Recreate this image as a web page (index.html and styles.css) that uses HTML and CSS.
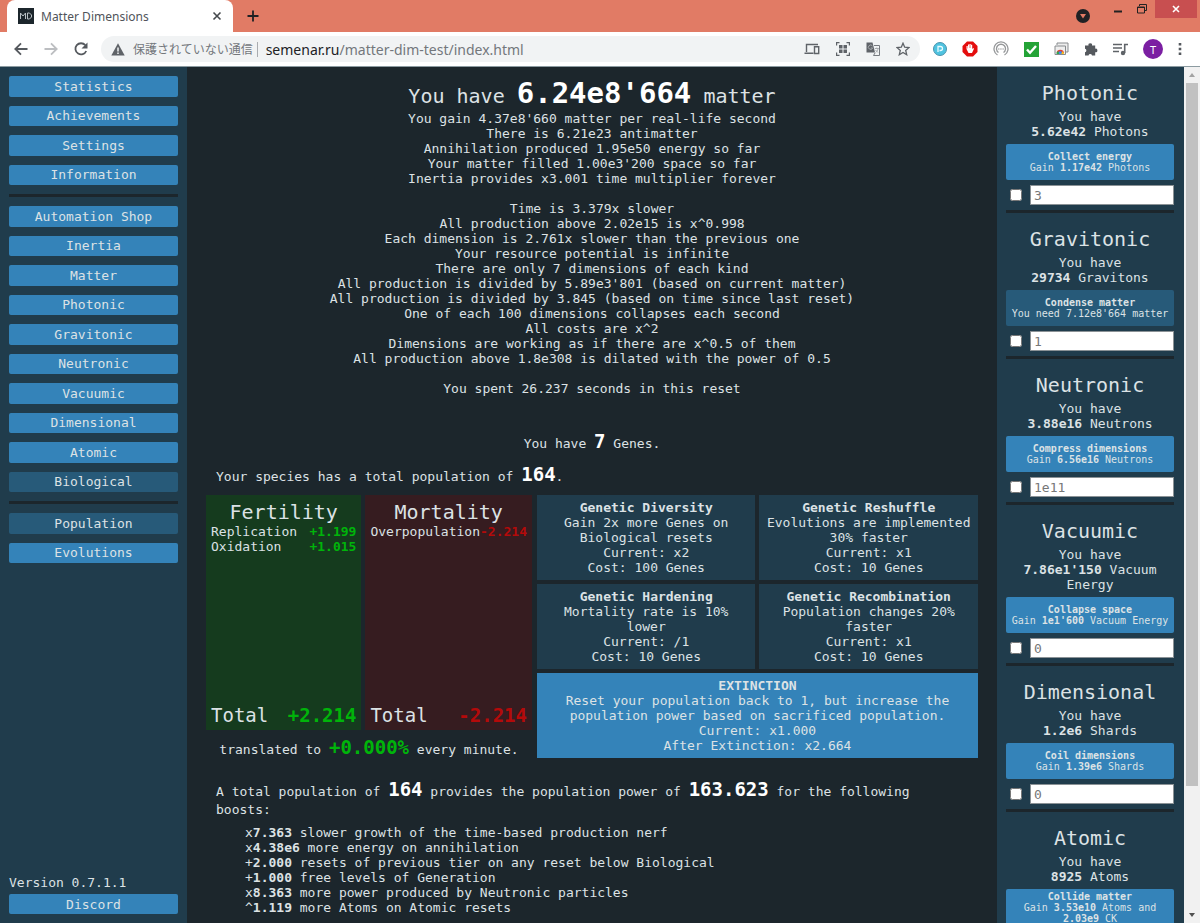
FILE: index.html
```html
<!DOCTYPE html>
<html lang="en">
<head>
    <meta charset="UTF-8">
    <meta name="viewport" content="width=device-width, initial-scale=1.0">
    <title>Matter Dimensions</title>
    <link rel="stylesheet" href="styles.css">
</head>
<body>
    <header class="browser">
        <div class="tab-strip">
            <div class="tab">
                <svg class="favicon" width="16" height="16" viewBox="0 0 16 16"><rect width="16" height="16" fill="#1c262c"/><path d="M2.500 11V5l2.500 3 2.500-3v6M9.500 5v6h2l2-2V7l-2-2z" fill="none" stroke="#b8c0c4"/></svg>
                <span class="tab-title">Matter Dimensions</span>
                <button class="icon-button" aria-label="Close tab"><svg width="10" height="10" viewBox="0 0 10 10"><path d="M1.500 1.500l7 7M8.500 1.500l-7 7" stroke="#45494d" stroke-width="1.600"/></svg></button>
            </div>
            <button class="icon-button new-tab" aria-label="New tab"><svg width="12" height="12" viewBox="0 0 12 12"><path d="M6 0.500v11M0.500 6h11" stroke="#202124" stroke-width="1.800"/></svg></button>
            <div class="window-buttons">
                <button class="icon-button account" aria-label="Tab search"><svg width="14" height="14" viewBox="0 0 14 14"><circle cx="7" cy="7" r="7" fill="#202124"/><path d="M4 5h6l-3 4.500z" fill="#e17b65"/></svg></button>
                <button class="icon-button minimize" aria-label="Minimize"><svg width="8" height="3" viewBox="0 0 8 3"><path d="M0 1.500h8" stroke="#222" stroke-width="2"/></svg></button>
                <button class="icon-button restore" aria-label="Restore"><svg width="10" height="10" viewBox="0 0 10 10"><path d="M2.500 2V0.500h7v6H8M0.500 3h7v6h-7z" fill="none" stroke="#222"/><path d="M0.500 3.500h7" stroke="#222"/></svg></button>
                <button class="icon-button close" aria-label="Close"><svg width="8" height="8" viewBox="0 0 8 8"><path d="M1 1l6 6M7 1l-6 6" stroke="#fff" stroke-width="1.600"/></svg></button>
            </div>
        </div>
        <div class="toolbar">
            <div class="nav-buttons">
                <button class="icon-button" aria-label="Back"><svg width="14" height="14" viewBox="0 0 14 14"><path d="M13.500 7H1.500M7 1.300L1.300 7 7 12.700" fill="none" stroke="#55595e" stroke-width="1.800"/></svg></button>
                <button class="icon-button" aria-label="Forward"><svg width="14" height="14" viewBox="0 0 14 14"><path d="M0.500 7h12M7 1.300L12.700 7 7 12.700" fill="none" stroke="#bcbec1" stroke-width="1.800"/></svg></button>
                <button class="icon-button" aria-label="Reload"><svg width="14" height="14" viewBox="0 0 14 14"><path d="M12.200 9a5.600 5.600 0 1 1-.9-5.800" fill="none" stroke="#55595e" stroke-width="1.800"/><path d="M13.500 0.500v6h-6z" fill="#55595e"/></svg></button>
            </div>
            <div class="omnibox">
                <svg width="14" height="13" viewBox="0 0 14 13"><path d="M7 0.300L13.700 12.500H0.300z" fill="#5f6368"/><path d="M7 4.500v4M7 9.500v1.500" stroke="#f1f3f4" stroke-width="1.500"/></svg>
                <span class="warning" lang="ja">保護されていない通信</span>
                <span class="url"><b>semenar.ru</b>/matter-dim-test/index.html</span>
                <svg width="16" height="14" viewBox="0 0 16 14"><path d="M14 2.500H2.500V10M0.500 11.200h9" fill="none" stroke="#5f6368" stroke-width="1.400"/><path d="M10.500 4.700h4.200v6.800h-4.200z" fill="none" stroke="#5f6368" stroke-width="1.400"/></svg>
                <svg width="14" height="14" viewBox="0 0 14 14"><path d="M0.600 3.500V0.600H3.500M10.500 0.600h2.900v2.900M13.400 10.500v2.900h-2.900M3.500 13.400H0.600v-2.900" fill="none" stroke="#5f6368" stroke-width="1.200"/><path d="M3 3h3.500v3.500H3zM7.500 3H11v3.500H7.500zM3 7.500h3.500V11H3zM7.500 7.500H11V11H7.500z" fill="#5f6368"/></svg>
                <svg width="14" height="14" viewBox="0 0 14 14"><path d="M0.500 0.500h6l2.500 10h-8.500z" fill="#5f6368"/><path d="M8 3.500h5.500v10H7.500l1.500-2.500" fill="none" stroke="#777b80"/><path d="M6.500 4A2.200 2.200 0 1 0 6.700 6H4.800M8.800 6.500h4M10.800 5.500v1M9.500 10.500c1.500-1 2.200-2 2.500-4M9.500 8l2.500 2.500" fill="none" stroke="#a8abae"/></svg>
                <svg width="14" height="14" viewBox="0 0 14 14"><path d="M7 1.200l1.700 4 4.300.4-3.300 2.800 1 4.300L7 10.400l-3.700 2.300 1-4.300L1 5.600l4.300-.4z" fill="none" stroke="#5f6368" stroke-width="1.300"/></svg>
            </div>
            <div class="extensions">
                <svg width="14" height="14" viewBox="0 0 14 14"><circle cx="7" cy="7" r="6.500" fill="#4fc3e0" stroke="#4b93ad"/><path d="M5 10V4.500h2.500a2 2 0 0 1 0 4H6.500" fill="none" stroke="#e8fbff" stroke-width="1.300"/></svg>
                <svg width="16" height="16" viewBox="0 0 16 16"><path d="M5 0.500h6L15.500 5v6L11 15.500H5L0.500 11V5z" fill="#e40d0d"/><path d="M4.500 8V5h1.200v2.500h.3V3.500h1.200V7h.3V3h1.200v4h.3V3.800h1.200V8l1-1 .8.8L10 12H6.500z" fill="#fff"/></svg>
                <svg width="16" height="16" viewBox="0 0 16 16"><path d="M4.500 14A7 7 0 1 1 11.500 14M5.500 11.500a4.500 4.500 0 1 1 5 0" fill="none" stroke="#96989a" stroke-width="1.300"/><path d="M5 8h6" stroke="#96989a" stroke-dasharray="1.500 .7"/></svg>
                <svg width="15" height="15" viewBox="0 0 15 15"><rect width="15" height="15" fill="#24a336"/><path d="M3 7.500l3 3.200L12 4" fill="none" stroke="#fff" stroke-width="2.400"/></svg>
                <svg width="15" height="14" viewBox="0 0 15 14"><path d="M3 3V1h11v9h-2M1 4h10.500v8.500H1z" fill="#eee" stroke="#888b8e"/><path d="M2.500 11a3.800 3.800 0 0 1 7.500 0z" fill="#e34133"/><path d="M2.500 12a3.800 3.800 0 0 1 1.500-3l2.200 3z" fill="#2da94f"/><path d="M10 12a3.800 3.800 0 0 0-1.500-2.700L6.200 12z" fill="#fbc116"/><circle cx="6.300" cy="10.500" r="1.500" fill="#4285f4"/></svg>
                <svg width="14" height="14" viewBox="0 0 14 14"><path d="M1 3.500h3.500a1.800 1.800 0 1 1 3.500 0h3.200v3.200a1.800 1.800 0 1 1 0 3.500v3.300H8a1.800 1.800 0 0 0-3.500 0H1v-3.300a1.800 1.800 0 0 0 0-3.500z" fill="#55595e"/></svg>
                <svg width="15" height="13" viewBox="0 0 15 13"><path d="M0 1.500h9M0 5h9M0 8.500h6M11.700 10V1.500H15" fill="none" stroke="#5f6368" stroke-width="1.600"/><circle cx="10" cy="10" r="2.200" fill="#5f6368"/></svg>
                <button class="avatar">T</button>
                <button class="icon-button" aria-label="Menu"><svg width="4" height="14" viewBox="0 0 4 14"><path d="M0.700 1h2.600v2.600H0.700zM0.700 5.700h2.600v2.600H0.700zM0.700 10.400h2.600V13H0.700z" fill="#55595e"/></svg></button>
            </div>
        </div>
    </header>

    <div class="page">
        <aside class="sidebar">
            <nav>
                <button>Statistics</button>
                <button>Achievements</button>
                <button>Settings</button>
                <button>Information</button>
                <hr>
                <button>Automation Shop</button>
                <button>Inertia</button>
                <button>Matter</button>
                <button>Photonic</button>
                <button>Gravitonic</button>
                <button>Neutronic</button>
                <button>Vacuumic</button>
                <button>Dimensional</button>
                <button>Atomic</button>
                <button class="dark">Biological</button>
                <hr>
                <button class="dark">Population</button>
                <button>Evolutions</button>
            </nav>
            <div class="version">
                Version 0.7.1.1
                <button>Discord</button>
            </div>
        </aside>

        <main>
            <h1>You have <b>6.24e8'664</b> matter</h1>
            <p class="info">
                You gain 4.37e8'660 matter per real-life second<br>
                There is 6.21e23 antimatter<br>
                Annihilation produced 1.95e50 energy so far<br>
                Your matter filled 1.00e3'200 space so far<br>
                Inertia provides x3.001 time multiplier forever
            </p>
            <p class="info">
                Time is 3.379x slower<br>
                All production above 2.02e15 is x^0.998<br>
                Each dimension is 2.761x slower than the previous one<br>
                Your resource potential is infinite<br>
                There are only 7 dimensions of each kind<br>
                All production is divided by 5.89e3'801 (based on current matter)<br>
                All production is divided by 3.845 (based on time since last reset)<br>
                One of each 100 dimensions collapses each second<br>
                All costs are x^2<br>
                Dimensions are working as if there are x^0.5 of them<br>
                All production above 1.8e308 is dilated with the power of 0.5
            </p>
            <p class="info">You spent 26.237 seconds in this reset</p>

            <p class="genes">You have <b>7</b> Genes.</p>
            <p class="species">Your species has a total population of <b>164</b>.</p>

            <div class="population">
                <div class="rates">
                    <section class="fertility">
                        <h2>Fertility</h2>
                        <div class="rate"><span>Replication</span><b>+1.199</b></div>
                        <div class="rate"><span>Oxidation</span><b>+1.015</b></div>
                        <div class="rate total"><span>Total</span><b>+2.214</b></div>
                    </section>
                    <section class="mortality">
                        <h2>Mortality</h2>
                        <div class="rate"><span>Overpopulation</span><b>-2.214</b></div>
                        <div class="rate total"><span>Total</span><b>-2.214</b></div>
                    </section>
                    <p class="translated">translated to <b>+0.000%</b> every minute.</p>
                </div>
                <div class="upgrades">
                    <button><b>Genetic Diversity</b><br>Gain 2x more Genes on Biological resets<br>Current: x2<br>Cost: 100 Genes</button>
                    <button><b>Genetic Reshuffle</b><br>Evolutions are implemented 30% faster<br>Current: x1<br>Cost: 10 Genes</button>
                    <button><b>Genetic Hardening</b><br>Mortality rate is 10% lower<br>Current: /1<br>Cost: 10 Genes</button>
                    <button><b>Genetic Recombination</b><br>Population changes 20% faster<br>Current: x1<br>Cost: 10 Genes</button>
                    <button class="extinction"><b>EXTINCTION</b><br>Reset your population back to 1, but increase the population power based on sacrificed population.<br>Current: x1.000<br>After Extinction: x2.664</button>
                </div>
            </div>

            <p class="power">A total population of <b>164</b> provides the population power of <b>163.623</b> for the following boosts:</p>
            <ul class="boosts">
                <li>x<b>7.363</b> slower growth of the time-based production nerf</li>
                <li>x<b>4.38e6</b> more energy on annihilation</li>
                <li>+<b>2.000</b> resets of previous tier on any reset below Biological</li>
                <li>+<b>1.000</b> free levels of Generation</li>
                <li>x<b>8.363</b> more power produced by Neutronic particles</li>
                <li>^<b>1.119</b> more Atoms on Atomic resets</li>
            </ul>
        </main>

        <aside class="resources">
            <section>
                <h2>Photonic</h2>
                <p>You have<br><b>5.62e42</b> Photons</p>
                <button><b>Collect energy</b><br>Gain <b>1.17e42</b> Photons</button>
                <div class="auto"><input type="checkbox" aria-label="Automate Photonic"><input type="text" value="3" aria-label="Photonic threshold"></div>
            </section>
            <section>
                <h2>Gravitonic</h2>
                <p>You have<br><b>29734</b> Gravitons</p>
                <button class="dark"><b>Condense matter</b><br>You need 7.12e8'664 matter</button>
                <div class="auto"><input type="checkbox" aria-label="Automate Gravitonic"><input type="text" value="1" aria-label="Gravitonic threshold"></div>
            </section>
            <section>
                <h2>Neutronic</h2>
                <p>You have<br><b>3.88e16</b> Neutrons</p>
                <button><b>Compress dimensions</b><br>Gain <b>6.56e16</b> Neutrons</button>
                <div class="auto"><input type="checkbox" aria-label="Automate Neutronic"><input type="text" value="1e11" aria-label="Neutronic threshold"></div>
            </section>
            <section>
                <h2>Vacuumic</h2>
                <p>You have<br><b>7.86e1'150</b> Vacuum Energy</p>
                <button><b>Collapse space</b><br>Gain <b>1e1'600</b> Vacuum Energy</button>
                <div class="auto"><input type="checkbox" aria-label="Automate Vacuumic"><input type="text" value="0" aria-label="Vacuumic threshold"></div>
            </section>
            <section>
                <h2>Dimensional</h2>
                <p>You have<br><b>1.2e6</b> Shards</p>
                <button><b>Coil dimensions</b><br>Gain <b>1.39e6</b> Shards</button>
                <div class="auto"><input type="checkbox" aria-label="Automate Dimensional"><input type="text" value="0" aria-label="Dimensional threshold"></div>
            </section>
            <section>
                <h2>Atomic</h2>
                <p>You have<br><b>8925</b> Atoms</p>
                <button><b>Collide matter</b><br>Gain <b>3.53e10</b> Atoms and <b>2.03e9</b> CK</button>
            </section>
        </aside>

        <div class="scrollbar">
            <svg width="16" height="16" viewBox="0 0 16 16"><path d="M5 10l3-4 3 4z" fill="#a3a3a3"/></svg>
            <div class="thumb"></div>
            <svg width="16" height="16" viewBox="0 0 16 16"><path d="M5 6l3 4 3-4z" fill="#505050"/></svg>
        </div>
    </div>
</body>
</html>
```
FILE: styles.css
```css
* {
    box-sizing: border-box;
}

body {
    margin: 0;
    height: 100vh;
    display: flex;
    flex-direction: column;
    overflow: hidden;
    background-color: #1c262c;
    color: #dce2e5;
    font-family: "DejaVu Sans Mono", "Liberation Mono", monospace;
    font-size: 13px;
    line-height: 15px;
}

h1, h2, p, ul {
    margin: 0;
    padding: 0;
    font-weight: normal;
}

button {
    border: none;
    padding: 0;
    font: inherit;
    color: inherit;
    cursor: pointer;
}

/* browser window */
.browser {
    flex: none;
    font-family: "Noto Sans", "Noto Sans CJK JP", sans-serif;
    background-color: #fff;
    border-bottom: 1px solid #8c9ba1;
}

.browser svg {
    display: block;
    flex: none;
}

.icon-button {
    background: none;
}

.tab-strip {
    display: flex;
    height: 32px;
    padding-left: 7px;
    background-color: #e17b65;
}

.tab {
    display: flex;
    align-items: center;
    width: 226px;
    padding: 0 11px;
    background-color: #fff;
    border-radius: 8px 8px 0 0;
}

.tab-title {
    flex: 1;
    margin-left: 7px;
    font-size: 12px;
    color: #50545a;
}

.new-tab {
    margin-left: 14px;
}

.window-buttons {
    display: flex;
    align-items: flex-start;
    margin-left: auto;
}

.account {
    margin: 9px 24px 0 0;
}

.minimize {
    margin: 10px 15px 0 0;
}

.restore {
    margin: 4px 8px 0 0;
}

.close {
    display: flex;
    align-items: center;
    justify-content: center;
    width: 42px;
    height: 18px;
    margin-right: 3px;
    background-color: #c84f50;
}

.toolbar {
    display: flex;
    align-items: center;
    height: 34px;
    padding: 0 18px 0 14px;
}

.nav-buttons {
    display: flex;
    gap: 16px;
    margin-right: 13px;
}

.omnibox {
    flex: 1;
    display: flex;
    align-items: center;
    gap: 16px;
    height: 26px;
    padding: 0 10px;
    border-radius: 13px;
    background-color: #f1f3f4;
    color: #73777c;
}

.warning {
    margin-left: -8px;
    padding-right: 4px;
    border-right: 1px solid #a9acb0;
    font-size: 12px;
}

.url {
    flex: 1;
    margin-left: -8px;
    font-size: 14px;
}

.url b {
    font-weight: normal;
    color: #202124;
}

.extensions {
    display: flex;
    align-items: center;
    gap: 15px;
    margin-left: 13px;
}

.avatar {
    width: 20px;
    height: 20px;
    border-radius: 50%;
    background-color: #7b1fa2;
    color: #fff;
    font-size: 11px;
}

/* game */
.page {
    flex: 1;
    min-height: 0;
    display: grid;
    grid-template-columns: 187px 1fr 187px 16px;
}

.sidebar, .resources {
    min-height: 0;
    background-color: #203c4c;
}

.sidebar {
    display: flex;
    flex-direction: column;
    justify-content: space-between;
    padding: 9px;
}

.sidebar button, .resources button {
    border-radius: 2px;
    background-color: #3483b9;
}

.sidebar .dark, .resources .dark {
    background-color: #275a79;
}

nav {
    display: flex;
    flex-direction: column;
    flex: 0 1 487px;
    gap: 9px;
}

nav button {
    flex: 1;
}

hr {
    width: 100%;
    height: 3px;
    margin: 0;
    border: none;
    background-color: #1c262c;
}

.version button {
    display: block;
    width: 100%;
    height: 20px;
    margin-top: 4px;
}

main {
    min-width: 0;
    padding: 11px 19px 0;
}

h1 {
    font-size: 20px;
    line-height: 30px;
    text-align: center;
}

h1 b {
    font-size: 29px;
    color: #fff;
}

.info {
    margin-bottom: 15px;
    text-align: center;
}

.genes, .species, .translated {
    line-height: 16px;
}

.genes b, .species b, .translated b, .power b {
    font-size: 19px;
    color: #fff;
}

.genes {
    margin-top: 37px;
    text-align: center;
}

.species {
    margin: 14px 10px 10px;
}

.population {
    display: grid;
    grid-template-columns: 17fr 23fr;
    gap: 5px;
}

.rates {
    display: grid;
    grid-template-columns: 1fr auto;
    grid-template-rows: 1fr auto;
    column-gap: 4px;
    row-gap: 9px;
}

.rates section {
    display: flex;
    flex-direction: column;
    padding: 5px 5px 3px;
}

.rates h2, .resources h2 {
    font-size: 20px;
    line-height: 24px;
    text-align: center;
}

.rate {
    display: flex;
    justify-content: space-between;
}

.total {
    margin-top: auto;
    font-size: 19px;
    line-height: 24px;
}

.fertility {
    background-color: #153b1e;
}

.mortality {
    background-color: #361c20;
}

.fertility b, .translated b {
    color: #00b40a;
}

.mortality b {
    color: #b40a0a;
}

.translated {
    grid-column: span 2;
    text-align: center;
}

.upgrades {
    display: grid;
    grid-template-columns: 1fr 1fr;
    gap: 4px;
}

.upgrades button {
    height: 85px;
    padding: 0 5px;
    background-color: #203c4c;
}

.upgrades .extinction {
    grid-column: span 2;
    background-color: #3483b9;
}

.power {
    margin: 22px 10px 6px;
    line-height: 18px;
}

.boosts {
    padding-left: 39px;
    list-style: none;
}

/* right column */
.resources {
    overflow: hidden;
    padding: 14px 10px 0 9px;
    text-align: center;
}

.resources section {
    margin-bottom: 14px;
    border-bottom: 3px solid #1c262c;
}

.resources p {
    margin: 4px 0 5px;
}

.resources button {
    width: 100%;
    min-height: 36px;
    font-size: 10px;
    line-height: 11px;
}

.auto {
    display: flex;
    align-items: center;
    gap: 8px;
    padding: 5px 0;
}

.auto input[type="checkbox"] {
    flex: none;
    width: 12px;
    height: 12px;
    margin: 0 0 0 4px;
}

.auto input[type="text"] {
    flex: 1;
    min-width: 0;
    height: 20px;
    padding: 0 3px;
    border: 1px solid #8b9296;
    font: inherit;
    color: #777;
    background-color: #fff;
}

.scrollbar {
    display: flex;
    flex-direction: column;
    background-color: #f1f1f1;
}

.thumb {
    flex: 0 1 703px;
    margin: 0 2px;
    background-color: #c1c1c1;
}

.scrollbar svg:last-child {
    margin-top: auto;
}
```
